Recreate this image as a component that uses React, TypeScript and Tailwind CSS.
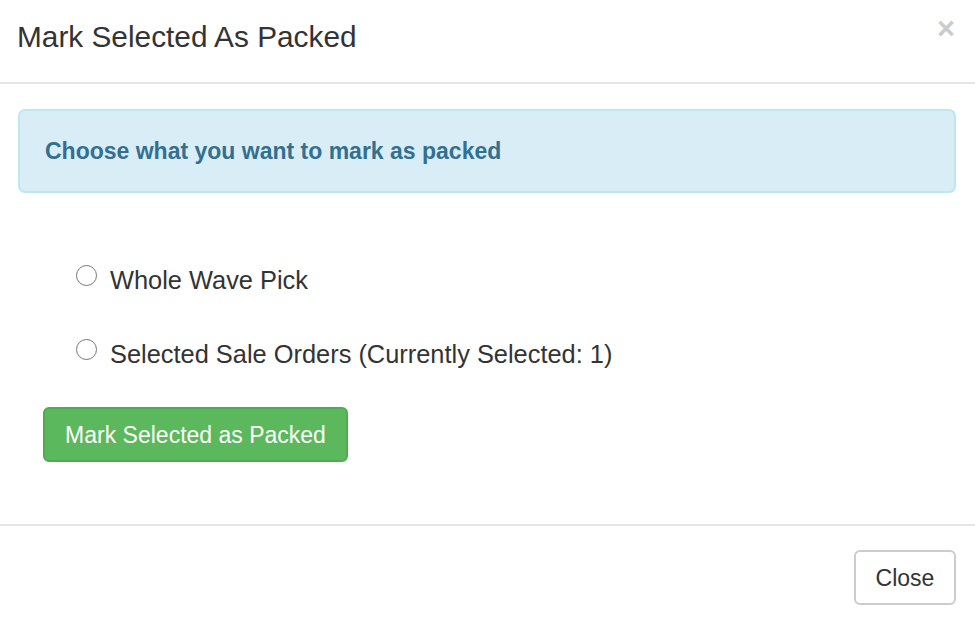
import React from "react";

function Radio({ label }: { label: string }) {
  return (
    <label className="flex items-start">
      <span className="mt-[3px] ml-[33px] box-border h-[21px] w-[21px] shrink-0 rounded-full border border-[#767676] bg-white" />
      <span className="ml-[13px] text-[25.4px] leading-[36px] text-[#333333]">{label}</span>
    </label>
  );
}

export default function App() {
  return (
    <div
      className="h-[623px] w-[975px] overflow-hidden bg-white"
      style={{ fontFamily: '"Liberation Sans", Arial, sans-serif' }}
    >
      {/* Header */}
      <div className="box-border flex h-[84px] items-start justify-between border-b-2 border-[#e5e5e5] pl-[17px] pr-[20px]">
        <h4 className="m-0 pt-[17px] text-[29.8px] font-normal leading-[40px] text-[#333333]">
          Mark Selected As Packed
        </h4>
        <button className="mt-[11px] text-[31px] font-bold leading-[36px] text-[#cccccc]">×</button>
      </div>

      {/* Body */}
      <div className="box-border h-[440px] pl-[18px] pr-[19px] pt-[25px]">
        <div className="box-border flex h-[84px] items-center rounded-[7px] border-2 border-[#bce8f1] bg-[#d9edf7] pl-[25px]">
          <span className="text-[23px] font-bold text-[#31708f]">Choose what you want to mark as packed</span>
        </div>
        <div className="pl-[25px] pt-[69px]">
          <Radio label="Whole Wave Pick" />
          <div className="h-[38px]" />
          <Radio label="Selected Sale Orders (Currently Selected: 1)" />
          <button className="mt-[35px] box-border h-[55px] w-[305px] rounded-[6px] border-2 border-[#4cae4c] bg-[#5cb85c] text-[23px] leading-[30px] text-white">
            Mark Selected as Packed
          </button>
        </div>
      </div>

      {/* Footer */}
      <div className="box-border flex h-[99px] justify-end border-t-2 border-[#e5e5e5] pr-[19px] pt-[24px]">
        <button className="box-border h-[55px] w-[102px] rounded-[6px] border-2 border-[#cccccc] bg-white text-[23px] leading-[30px] text-[#333333]">
          Close
        </button>
      </div>
    </div>
  );
}
